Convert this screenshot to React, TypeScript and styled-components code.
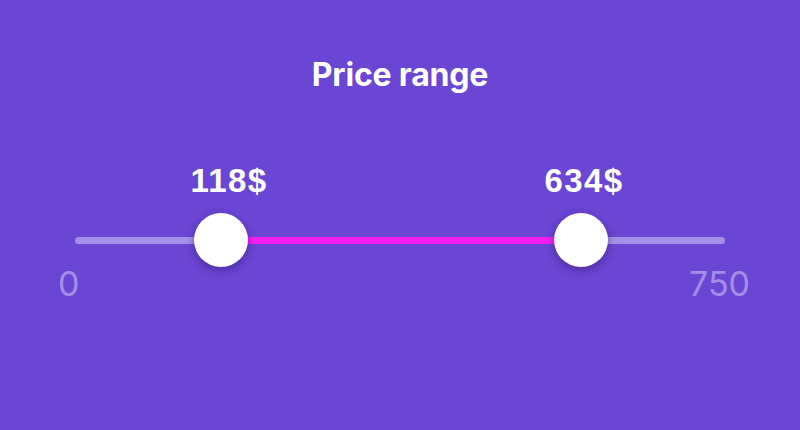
import React from 'react';
import styled, { createGlobalStyle } from 'styled-components';

const GlobalStyle = createGlobalStyle`
  html, body {
    margin: 0;
    padding: 0;
    background: #6b45d3;
  }

  body {
    font-family: Inter, "Liberation Sans", sans-serif;
  }
`;

const Page = styled.div`
  align-items: center;
  background: #6b45d3;
  box-sizing: border-box;
  display: flex;
  flex-direction: column;
  height: 430px;
  padding-top: 56px;
  width: 800px;
`;

const Title = styled.h1`
  color: #ffffff;
  font-size: 32px;
  font-weight: 700;
  letter-spacing: -0.2px;
  line-height: 38px;
  margin: 0;
`;

const SliderBlock = styled.div`
  display: flex;
  flex-direction: column;
  margin-top: 68px;
  width: 650px;
`;

const TrackArea = styled.div`
  height: 94px;
  position: relative;
`;

const Rail = styled.div`
  background: #a690e8;
  border-radius: 4px;
  height: 7px;
  left: 0;
  position: absolute;
  right: 0;
  top: 75px;
`;

const ActiveRail = styled.div`
  background: #f41ef3;
  height: 7px;
  position: absolute;
  top: 75px;
`;

const Thumb = styled.div`
  background: #ffffff;
  border-radius: 50%;
  box-shadow: 0 3px 8px rgba(40, 10, 90, 0.45);
  height: 54px;
  position: absolute;
  top: 51px;
  transform: translateX(-50%);
  width: 54px;
`;

const ValueLabel = styled.span`
  color: #ffffff;
  font-family: "Liberation Sans", Arial, sans-serif;
  font-size: 33px;
  font-weight: 700;
  letter-spacing: 1.4px;
  line-height: 38px;
  position: absolute;
  top: 0;
  transform: translateX(-50%);
  white-space: nowrap;
`;

const Scale = styled.div`
  color: #a58de6;
  display: flex;
  font-size: 34px;
  justify-content: space-between;
  line-height: 38px;
  margin: 9px -25px 0 -17px;
`;

interface Handle {
  value: number;
  offset: number;
  labelShift: number;
}

const handles: Handle[] = [
  { value: 118, offset: 146, labelShift: 8 },
  { value: 634, offset: 506, labelShift: 3 },
];

export default function App() {
  const [low, high] = handles;

  return (
    <Page>
      <GlobalStyle />
      <Title>Price range</Title>
      <SliderBlock>
        <TrackArea>
          <Rail />
          <ActiveRail style={{ left: low.offset, width: high.offset - low.offset }} />
          {handles.map((h) => (
            <React.Fragment key={h.value}>
              <ValueLabel style={{ left: h.offset + h.labelShift }}>{h.value}$</ValueLabel>
              <Thumb style={{ left: h.offset }} />
            </React.Fragment>
          ))}
        </TrackArea>
        <Scale>
          <span>0</span>
          <span>750</span>
        </Scale>
      </SliderBlock>
    </Page>
  );
}
